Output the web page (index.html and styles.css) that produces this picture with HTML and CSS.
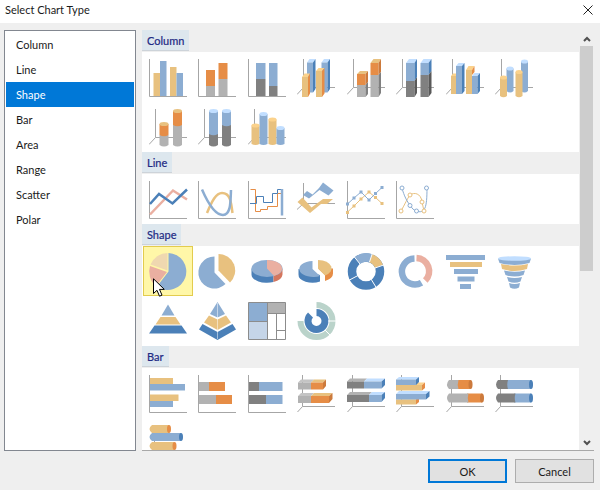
FILE: index.html
```html
<!DOCTYPE html>
<html lang="en">
<head>
    <meta charset="UTF-8">
    <meta name="viewport" content="width=device-width, initial-scale=1.0">
    <title>Select Chart Type</title>
    <link rel="stylesheet" href="styles.css">
</head>
<body>
    <!-- shared axes -->
    <svg class="defs" aria-hidden="true">
        <symbol id="axes" viewBox="0 0 38 38"><path class="axis" d="M.5 0V37.5H38"/></symbol>
        <symbol id="axes3d" viewBox="0 0 38 38"><path class="axis" d="M6.5 0V28.5H38M6.5 28.5L0 35.5"/></symbol>
        <symbol id="axesBar" viewBox="0 0 38 38"><path class="axis" d="M5.5 0V31.5H38M5.5 31.5L.5 37"/></symbol>
    </svg>

    <header class="title-bar">
        <h1>Select Chart Type</h1>
        <button type="button" class="close" aria-label="Close">
            <svg width="10" height="10" viewBox="0 0 10 10"><path d="M.5 .5L9.5 9.5M9.5 .5L.5 9.5"/></svg>
        </button>
    </header>

    <main class="content">
        <nav class="categories">
            <button type="button">Column</button>
            <button type="button">Line</button>
            <button type="button" class="active">Shape</button>
            <button type="button">Bar</button>
            <button type="button">Area</button>
            <button type="button">Range</button>
            <button type="button">Scatter</button>
            <button type="button">Polar</button>
        </nav>

        <div class="gallery">
            <div class="groups">
                <section>
                    <h2><span>Column</span></h2>
                    <div class="charts">
                        <button type="button" aria-label="Clustered column"><svg viewBox="0 0 38 38"><path class="yellow" d="M4.5 14H11V37H4.5zM21 8H27.5V37H21z"/><path class="blue" d="M11 2H17.5V37H11zM27.5 14H34V37H27.5z"/><use href="#axes"/></svg></button>
                        <button type="button" aria-label="Stacked column"><svg viewBox="0 0 38 38"><path class="orange" d="M8 11H17V27H8zM20.5 4H29.5V20H20.5z"/><path class="gray" d="M8 27H17V37H8zM20.5 20H29.5V37H20.5z"/><use href="#axes"/></svg></button>
                        <button type="button" aria-label="Full stacked column"><svg viewBox="0 0 38 38"><path class="blue" d="M8 4H17.5V20H8zM21 4H29.5V27H21z"/><path class="dark" d="M8 20H17.5V37H8zM21 27H29.5V37H21z"/><use href="#axes"/></svg></button>
                        <button type="button" aria-label="Manhattan column"><svg viewBox="0 0 38 38"><use href="#axes3d"/>
                            <path class="light" d="M10 3.5L12.5 0H18.5L16 3.5zM24.5 3.5L27 0H33L30.5 3.5z"/><path class="blue" d="M10 3.5H16V33.5H10zM24.5 3.5H30.5V33.5H24.5z"/><path class="navy" d="M16 3.5L18.5 0V30L16 33.5zM30.5 3.5L33 0V30L30.5 33.5z"/>
                            <path class="cream" d="M5 18L7.5 14.5H13L11 18zM19 12L21.5 9H27.5L25 12z"/><path class="yellow" d="M5 18H11V38H5zM19 12H25V38H19z"/><path class="orange" d="M11 18L13 14.5V34.5L11 38zM25 12L27.5 9V34.5L25 38z"/></svg></button>
                        <button type="button" aria-label="3D stacked column"><svg viewBox="0 0 38 38"><use href="#axes3d"/>
                            <path class="yellow" d="M10 15L13 12H21L18.5 15zM23.5 4L26.5 0H34L31.5 4z"/><path class="orange" d="M10 15H18.5V26H10zM23.5 4H31.5V16H23.5z"/><path class="rust" d="M18.5 15L21 12V23L18.5 26zM31.5 4L34 0V13L31.5 16z"/>
                            <path class="gray" d="M10 26H18.5V38H10zM23.5 16H31.5V38H23.5z"/><path class="dark" d="M18.5 26L21 23V35L18.5 38zM31.5 16L34 13V34L31.5 38z"/></svg></button>
                        <button type="button" aria-label="3D full stacked column"><svg viewBox="0 0 38 38"><use href="#axes3d"/>
                            <path class="light" d="M10 4L13 0H21L18.5 4zM24.5 4L27.5 0H35.5L32.5 4z"/><path class="blue" d="M10 4H18.5V22H10zM24.5 4H32.5V16H24.5z"/><path class="navy" d="M18.5 4L21 0V18L18.5 22zM32.5 4L35.5 0V12L32.5 16z"/>
                            <path class="dark" d="M10 22H18.5V38H10zM24.5 16H32.5V38H24.5z"/><path class="black" d="M18.5 22L21 18V34L18.5 38zM32.5 16L35.5 12V34L32.5 38z"/></svg></button>
                        <button type="button" aria-label="3D clustered column"><svg viewBox="0 0 38 38"><use href="#axes3d"/>
                            <path class="cream" d="M5 17L7 14.5H12V17zM20 11L22.5 7H28.5L26 11z"/><path class="yellow" d="M5 17H11V35H5zM20 11H26V35H20z"/><path class="orange" d="M26 11L28.5 7V13L26 16z"/>
                            <path class="light" d="M10 7L12.5 4H18.5L16 7zM26 17L28.5 14H34L31.5 17z"/><path class="blue" d="M10 7H16V35H10zM26 17H31.5V35H26z"/><path class="navy" d="M16 7L18.5 4V32L16 35zM31.5 17L34 14V32L31.5 35z"/></svg></button>
                        <button type="button" aria-label="Manhattan cylinder"><svg viewBox="0 0 38 38"><use href="#axes3d"/>
                            <path class="blue" d="M11.5 9.5H18.5V32Q15 35 11.5 32zM26 2.5H33V32Q29.5 35 26 32z"/><ellipse class="light" cx="15" cy="9.5" rx="3.5" ry="2"/><ellipse class="light" cx="29.5" cy="2.5" rx="3.5" ry="2"/>
                            <path class="yellow" d="M5 18.5H12V37Q8.5 39.5 5 37zM20.5 13H27.5V37Q24 39.5 20.5 37z"/><ellipse class="cream" cx="8.5" cy="18.5" rx="3.5" ry="2"/><ellipse class="cream" cx="24" cy="13" rx="3.5" ry="2"/></svg></button>
                        <button type="button" aria-label="Stacked cylinder"><svg viewBox="0 0 38 38"><use href="#axes3d"/>
                            <path class="gray" d="M10.5 26H19.5V36Q15 39 10.5 36zM24 16H33V36Q28.5 39 24 36z"/><path class="orange" d="M10.5 15H19.5V26Q15 28.5 10.5 26zM24 2H33V16Q28.5 18.5 24 16z"/><ellipse class="yellow" cx="15" cy="15" rx="4.5" ry="2"/><ellipse class="yellow" cx="28.5" cy="2" rx="4.5" ry="2"/></svg></button>
                        <button type="button" aria-label="Full stacked cylinder"><svg viewBox="0 0 38 38"><use href="#axes3d"/>
                            <path class="dark" d="M11 25H20V36Q15.5 39 11 36zM24 16H33V36Q28.5 39 24 36z"/><path class="blue" d="M11 2H20V25Q15.5 27.5 11 25zM24 2H33V16Q28.5 18.5 24 16z"/><ellipse class="light" cx="15.5" cy="2" rx="4.5" ry="2"/><ellipse class="light" cx="28.5" cy="2" rx="4.5" ry="2"/></svg></button>
                        <button type="button" aria-label="Clustered cylinder"><svg viewBox="0 0 38 38"><use href="#axes3d"/>
                            <path class="yellow" d="M3.5 16.5H11.5V35Q7.5 37 3.5 35zM20.5 10.5H28.5V35Q24.5 37 20.5 35z"/><path class="blue" d="M11.5 5H19.5V35Q15.5 37 11.5 35zM28.5 19H36.5V35Q32.5 37 28.5 35z"/>
                            <ellipse class="cream" cx="7.5" cy="16.5" rx="4" ry="2"/><ellipse class="cream" cx="24.5" cy="10.5" rx="4" ry="2"/><ellipse class="light" cx="15.5" cy="5" rx="4" ry="2"/><ellipse class="light" cx="32.5" cy="19" rx="4" ry="2"/></svg></button>
                    </div>
                </section>

                <section>
                    <h2><span>Line</span></h2>
                    <div class="charts">
                        <button type="button" aria-label="Line"><svg viewBox="0 0 38 38"><use href="#axes"/><path class="line pink-line" d="M1 33.5L24 9.5L38 18.5"/><path class="line navy-line" d="M1 23L10 13L23.5 22.5L38 8.5"/></svg></button>
                        <button type="button" aria-label="Spline"><svg viewBox="0 0 38 38"><use href="#axes"/><path class="line yellow-line" d="M9 32C14 20 18 12 24 12C32 12 33 20 34.5 32"/><path class="line blue-line" d="M4 8.5C9 20 16 34 25 34C33 34 32.5 20 33 9"/></svg></button>
                        <button type="button" aria-label="Step line"><svg viewBox="0 0 38 38"><use href="#axes"/><path class="thin orange-line" d="M2.5 8.5H7.5V30.5H12.5V28.5H19.5V25.5H29.5V12.5H34"/><path class="thin navy-line" d="M2 22.5H8.5V15.5H15.5V21.5H24.5V12.5H29.5V8.5H34.5"/><path class="line blue-line" d="M34 8V34.5"/></svg></button>
                        <button type="button" aria-label="3D line"><svg viewBox="0 0 38 38"><path class="axis" d="M6.5 2V22.5H38M6.5 22.5L0 28.5"/><path class="blue" d="M6 14L10 10L15.5 13.5L22 7L26 1.5L36.5 9.5L31.5 14.5L22.5 9L12 17.5z"/><path class="yellow" d="M.5 21L5.5 16.5L14.5 26.5L26 18H36L30 23H24L13 32z"/></svg></button>
                        <button type="button" aria-label="Scatter line"><svg viewBox="0 0 38 38"><use href="#axes"/><path class="thin yellow-line" d="M.5 31L7 25L14 18L22 11L28.5 16.5L35 22.5"/><path class="thin blue-line" d="M.5 23L7 17L14 11L22 19L28.5 12.5L35 6.5"/>
                            <path class="yellow" d="M-1 30h3v3h-3zM5.5 23.5h3v3h-3zM12.5 16.5h3v3h-3zM20.5 9.5h3v3h-3zM27 15h3v3h-3zM33.5 21h3v3h-3z"/><path class="blue" d="M-1 21.5h3v3h-3zM5.5 15.5h3v3h-3zM12.5 9.5h3v3h-3zM20.5 17.5h3v3h-3zM27 11h3v3h-3zM33.5 5h3v3h-3z"/></svg></button>
                        <button type="button" aria-label="Scatter spline"><svg viewBox="0 0 38 38"><use href="#axes"/><path class="thin yellow-line" d="M5 30C9 23 11 18 14 14C18 11 25 12 26 21L28 30"/><path class="thin blue-line" d="M6 7C8 15 11 20 14 24.5Q17 29 20 30C29 33 31 27 31 7"/>
                            <g class="ring yellow-line"><circle cx="5" cy="30" r="2"/><circle cx="14" cy="14" r="2"/><circle cx="26" cy="21" r="2"/><circle cx="28" cy="30" r="2"/></g><g class="ring blue-line"><circle cx="6" cy="7" r="2"/><circle cx="14" cy="24.5" r="2"/><circle cx="20.5" cy="30" r="2"/><circle cx="30.5" cy="7" r="2"/></g></svg></button>
                    </div>
                </section>

                <section>
                    <h2><span>Shape</span></h2>
                    <div class="charts">
                        <button type="button" class="selected" aria-label="Pie">
                            <svg viewBox="0 0 38 38"><path class="blue" d="M19.5 18.5V0A18.5 18.5 0 1 1 8 33.5z"/><path class="pink" d="M18 19L7 33A18.5 18.5 0 0 1 1 13z"/><path class="tan" d="M18.5 17.5L1.5 11.5A18.5 18.5 0 0 1 18.5 0z"/></svg>
                            <svg class="cursor" viewBox="0 0 12 19"><path d="M.5 .8V15.5L4 12.3L6.5 18.2L9 17.1L6.5 11.4H11.3z"/></svg>
                        </button>
                        <button type="button" aria-label="Exploded pie"><svg viewBox="0 0 38 38"><path class="blue" d="M16.5 19.5V3.5A16 16 0 1 0 27.5 31z"/><path class="yellow" d="M20.5 17.5V1A16.5 16.5 0 0 1 32 29.5z"/></svg></button>
                        <button type="button" aria-label="3D pie"><svg viewBox="0 0 38 38"><path class="navy" d="M3.5 15.5V21.5A15.5 8 0 0 0 25.5 29V22z"/><path class="red" d="M34.5 15.5V21.5Q34 27 25.5 29V22z"/><ellipse class="blue" cx="19" cy="15.5" rx="15.5" ry="8.5"/><path class="pink" d="M19 15.5V7A15.5 8.5 0 0 1 26 23z"/></svg></button>
                        <button type="button" aria-label="3D exploded pie"><svg viewBox="0 0 38 38"><path class="navy" d="M1.5 16V21.5A14 8 0 0 0 23 28.5V22z"/><path class="blue" d="M15.5 16V8A14 8 0 1 0 23 23z"/><path class="orange" d="M21 15.5L28 22V28Q36 25.5 36 20.5V15.5z"/><path class="yellow" d="M21 15.5V7A15 8.5 0 0 1 28 22.5z"/></svg></button>
                        <button type="button" aria-label="Doughnut"><svg viewBox="0 0 38 38"><g fill="none" stroke-width="8.5"><circle class="navy-line" cx="19" cy="18.5" r="14"/><path class="blue-line" d="M10.4 7.5A14 14 0 0 1 23.8 5.3"/><path class="yellow-line" d="M23.8 5.3A14 14 0 0 1 32 13.3"/></g><path class="split" d="M13 11L7 3.5M22.5 9L25.5 0M28 15L38 11.5M24 26L29.5 35M11 22.5L1.5 27.5"/></svg></button>
                        <button type="button" aria-label="Exploded doughnut"><svg viewBox="0 0 38 38"><g fill="none" stroke-width="6.5"><path class="blue-line" d="M18.5 5.5A13 13 0 1 0 25.5 29.7"/><path class="pink-line" d="M20.5 5A13.2 13.2 0 0 1 29.3 27.5"/></g></svg></button>
                        <button type="button" aria-label="Funnel"><svg viewBox="0 0 38 38"><path class="blue" d="M0 2H39V7H0zM8 16H32V21H8zM11.5 23.5H28.5V28.5H11.5zM14 31H25V36H14z"/><path class="yellow" d="M4 9H36V14H4z"/></svg></button>
                        <button type="button" aria-label="3D funnel"><svg viewBox="0 0 38 38"><path class="blue" d="M14 30Q19.5 32 25 30L24 34.5Q19.5 37 15 34.5z"/><path class="blue" d="M12 24Q19.5 26 27 24L25.5 28.5Q19.5 31 13.5 28.5z"/><path class="blue" d="M9 17.5Q19.5 20 30 17.5L28.5 22Q19.5 25 10.5 22z"/><path class="yellow" d="M6 11Q19.5 14 33 11L32 16Q19.5 20 7 16z"/><path class="blue" d="M3 5.5H36L34.5 10Q19.5 14 4.5 10z"/><ellipse class="light" cx="19.5" cy="5.5" rx="16.5" ry="2.3"/></svg></button>
                        <button type="button" aria-label="Pyramid"><svg viewBox="0 0 38 38"><path class="blue" d="M19 1.5L25.5 12.5H12.5z"/><path class="yellow" d="M11.5 14H26.5L31.5 21.5H6.5z"/><path class="navy" d="M5.5 22.5H32.5L38 30.5H0z"/></svg></button>
                        <button type="button" aria-label="3D pyramid"><svg viewBox="0 0 38 38"><path class="blue" d="M19.5 -1L27 11L19.5 14.5L12 11z"/><path class="yellow" d="M11 12.5L19.5 16.5L28 12.5L33 19.5L19.5 27L6 19.5z"/><path class="navy" d="M4.5 21L19.5 29L34.5 21L38 26.5L19.5 37L1 26.5z"/><path class="seam" d="M19.5 0V36"/></svg></button>
                        <button type="button" aria-label="Treemap"><svg viewBox="0 0 38 38"><path fill="#fff" d="M.5 -.5H37.5V36.5H.5z"/><path class="blue" d="M.5 -.5H19.5V18.5H.5z"/><path class="pale" d="M.5 18.5H19.5V36.5H.5z"/><path class="gray" d="M19.5 -.5H37.5V10.5H19.5z"/><path class="grid" d="M.5 -.5H37.5V36.5H.5zM19.5 -.5V36.5M.5 18.5H19.5M19.5 10.5H37.5M28.5 10.5V36.5M28.5 27.5H37.5"/></svg></button>
                        <button type="button" aria-label="Sunburst"><svg viewBox="0 0 38 38"><g fill="none" stroke-width="6"><path class="green-line" d="M19.5 2A16 16 0 1 1 3.5 18"/><path class="navy-line" stroke-width="7" d="M19.5 9.5A8.5 8.5 0 1 1 13.5 12"/></g><path class="split" d="M31 18H39M28 27L34 33"/></svg></button>
                    </div>
                </section>

                <section>
                    <h2><span>Bar</span></h2>
                    <div class="charts">
                        <button type="button" aria-label="Clustered bar"><svg viewBox="0 0 38 38"><path class="yellow" d="M1 3H24V9H1zM1 19.5H29.5V26H1z"/><path class="blue" d="M1 9H36V15.5H1zM1 26H24V32H1z"/><use href="#axes"/></svg></button>
                        <button type="button" aria-label="Stacked bar"><svg viewBox="0 0 38 38"><path class="gray" d="M1 7H11V16H1zM1 20H18V29H1z"/><path class="orange" d="M11 7H27V16H11zM18 20H34V29H18z"/><use href="#axes"/></svg></button>
                        <button type="button" aria-label="Full stacked bar"><svg viewBox="0 0 38 38"><path class="dark" d="M1 7H11V16H1zM1 20H18V29H1z"/><path class="blue" d="M11 7H34.5V16H11zM18 20H34.5V29H18z"/><use href="#axes"/></svg></button>
                        <button type="button" aria-label="3D stacked bar"><svg viewBox="0 0 38 38"><use href="#axesBar"/>
                            <path class="silver" d="M1 7.5L4 4.5H17L14 7.5zM1 21L4 18H17L14 21z"/><path class="yellow" d="M14 7.5L17 4.5H29L26 7.5zM14 21L17 18H35.5L32 21z"/><path class="gray" d="M1 7.5H14V14.5H1zM1 21H14V28H1z"/><path class="orange" d="M14 7.5H26V14.5H14zM14 21H32V28H14z"/><path class="rust" d="M26 7.5L29 4.5V11L26 14.5zM32 21L35.5 18V24L32 28z"/></svg></button>
                        <button type="button" aria-label="3D full stacked bar"><svg viewBox="0 0 38 38"><use href="#axesBar"/>
                            <path class="gray" d="M0 6.5L3 3.5H20L17 6.5zM0 20L3 17H25L22 20z"/><path class="light" d="M17 6.5L20 3.5H38L34.5 6.5zM22 20L25 17H38L34.5 20z"/><path class="dark" d="M0 6.5H17V13.5H0zM0 20H22V27H0z"/><path class="blue" d="M17 6.5H34.5V13.5H17zM22 20H34.5V27H22z"/><path class="navy" d="M34.5 6.5L38 3.5V10L34.5 13.5zM34.5 20L38 17V23L34.5 27z"/></svg></button>
                        <button type="button" aria-label="3D clustered bar"><svg viewBox="0 0 38 38"><use href="#axesBar"/>
                            <path class="cream" d="M0 10L3 7.5H29L26 10zM0 24.5L3 22H23L20 24.5z"/><path class="yellow" d="M0 10H26V15.5H0zM0 24.5H20V29.5H0z"/><path class="orange" d="M26 10L29 7.5V13L26 15.5zM20 24.5L23 22V27L20 29.5z"/>
                            <path class="light" d="M0 4.5L3 2H23L20 4.5zM0 19L3 16H33.5L30 19z"/><path class="blue" d="M0 4.5H20V10H0zM0 19H30V24.5H0z"/><path class="navy" d="M20 4.5L23 2V7L20 10zM30 19L33.5 16V21.5L30 24.5z"/></svg></button>
                        <button type="button" aria-label="Stacked cylinder bar"><svg viewBox="0 0 38 38"><use href="#axesBar"/>
                            <path class="orange" d="M11 5H24.5V14H11zM21 18.5H36V27.5H21z"/><path class="gray" d="M3 5H12.5Q11 9.5 12.5 14H3Q-1 9.5 3 5zM3 18.5H22.5Q21 23 22.5 27.5H3Q-1 23 3 18.5z"/><ellipse class="rust" cx="24.5" cy="9.5" rx="2" ry="4.5"/><ellipse class="rust" cx="36" cy="23" rx="2" ry="4.5"/></svg></button>
                        <button type="button" aria-label="Full stacked cylinder bar"><svg viewBox="0 0 38 38"><use href="#axesBar"/>
                            <path class="blue" d="M11 5H36V14H11zM19 18.5H36V27.5H19z"/><path class="dark" d="M3 5H13Q11.5 9.5 13 14H3Q-1 9.5 3 5zM3 18.5H20.5Q19 23 20.5 27.5H3Q-1 23 3 18.5z"/><ellipse class="navy" cx="36" cy="9.5" rx="2" ry="4.5"/><ellipse class="navy" cx="36" cy="23" rx="2" ry="4.5"/></svg></button>
                        <button type="button" aria-label="Clustered cylinder bar"><svg viewBox="0 0 38 38"><use href="#axesBar"/>
                            <path class="yellow" d="M3 0H20V8H3Q-2 4 3 0zM3 17H25.5V25H3Q-2 21 3 17z"/><path class="blue" d="M3 8H32V16H3Q-2 12 3 8z"/><ellipse class="orange" cx="20" cy="4" rx="2" ry="4"/><ellipse class="navy" cx="32" cy="12" rx="2" ry="4"/><ellipse class="orange" cx="25.5" cy="21" rx="2" ry="4"/></svg></button>
                    </div>
                </section>
            </div>

            <div class="scrollbar" aria-hidden="true">
                <svg width="8" height="16" viewBox="0 0 8 16"><path d="M1 11L4 8L7 11"/></svg>
                <div class="track"><div class="thumb"></div></div>
                <svg width="8" height="16" viewBox="0 0 8 16"><path d="M1 7L4 10L7 7"/></svg>
            </div>
        </div>
    </main>

    <footer class="actions">
        <button type="button" class="primary">OK</button>
        <button type="button">Cancel</button>
    </footer>
</body>
</html>
```
FILE: styles.css
```css
* {
    box-sizing: border-box;
}

body {
    display: flex;
    flex-direction: column;
    height: 100vh;
    margin: 0;
    background-color: #efefef;
    color: #1a1a1a;
    font-family: Lato, "Open Sans", sans-serif;
    font-size: 11px;
    overflow: hidden;
}

button {
    margin: 0;
    padding: 0;
    border: none;
    background: none;
    color: inherit;
    font: inherit;
}

.defs {
    position: absolute;
    width: 0;
    height: 0;
}

/* title bar */
.title-bar {
    display: flex;
    justify-content: space-between;
    align-items: center;
    height: 23px;
    padding: 0 7px 4px 5px;
    background-color: white;
}

.title-bar h1 {
    margin: 0;
    font-size: 11px;
    font-weight: normal;
}

.close {
    display: flex;
}

.close svg {
    fill: none;
    stroke: #222;
}

.content {
    display: flex;
    flex: 1;
    gap: 6px;
    min-height: 0;
    padding: 7px 6px 0 4px;
}

/* category list */
.categories {
    flex: none;
    width: 132px;
    padding: 1px;
    border: 1px solid #828790;
    background-color: white;
}

.categories button {
    display: block;
    width: 100%;
    height: 25px;
    padding-left: 10px;
    text-align: left;
}

.categories .active {
    background-color: #0078d7;
    color: white;
}

/* chart gallery */
.gallery {
    display: flex;
    flex: 1;
    min-width: 0;
    border-bottom: 1px solid #a8a8a8;
}

.groups {
    flex: 1;
    overflow: hidden;
    background-color: white;
}

.groups h2 {
    display: flex;
    height: 22px;
    margin: 0;
    background-color: #efefef;
    color: #1e2a84;
    font-size: 11px;
    font-weight: normal;
    line-height: 22px;
}

.groups h2 span {
    height: 21px;
    padding: 0 5px;
    border-bottom: 1px solid #cdd3d9;
    background-color: #dde7ee;
    -webkit-text-stroke: 0.2px #1e2a84;
}

.charts {
    display: grid;
    grid-template-columns: repeat(8, 1fr);
    grid-auto-rows: 50px;
    max-width: 398px;
    padding: 0 1px;
}

.charts button {
    position: relative;
    display: flex;
    justify-content: center;
    padding-top: 7px;
}

.charts svg {
    width: 38px;
    height: 38px;
    overflow: visible;
}

.charts .selected {
    border: 1px solid #e3cc4e;
    padding-top: 6px;
    background-color: #fff7a8;
}

.charts .cursor {
    position: absolute;
    left: 9px;
    top: 31px;
    width: 12px;
    height: 19px;
    fill: white;
    stroke: black;
}

/* scrollbar */
.scrollbar {
    display: flex;
    flex-direction: column;
    align-items: center;
    width: 15px;
}

.scrollbar svg {
    flex: none;
    fill: none;
    stroke: #505050;
    stroke-width: 2;
}

.track {
    flex: 1;
    width: 13px;
}

.thumb {
    height: 58%;
    background-color: #cdcdcd;
}

/* buttons */
.actions {
    display: flex;
    justify-content: flex-end;
    gap: 8px;
    padding: 8px 6px 7px;
}

.actions button {
    width: 79px;
    height: 24px;
    border: 1px solid #adadad;
    background-color: #e1e1e1;
}

.actions .primary {
    border: 2px solid #0078d7;
}

/* icon colours */
.yellow { fill: #e8c17f; }
.cream { fill: #fbd28c; }
.tan { fill: #efd8b0; }
.blue { fill: #8cadd2; }
.light { fill: #c1deff; }
.pale { fill: #c5d5e8; }
.navy { fill: #4b80b8; }
.orange { fill: #e68d46; }
.rust { fill: #cc7a3c; }
.pink { fill: #eaafa1; }
.red { fill: #d4765e; }
.silver { fill: #c4c4c4; }
.gray { fill: #b2b2b2; }
.dark { fill: #808080; }
.black { fill: #595959; }

.axis {
    fill: none;
    stroke: #a6a6a6;
}

.line {
    fill: none;
    stroke-width: 2.5;
}

.thin {
    fill: none;
    stroke-width: 1;
}

.ring {
    fill: white;
    stroke-width: 1;
}

.navy-line { stroke: #4b80b8; }
.blue-line { stroke: #8cadd2; }
.yellow-line { stroke: #e8c17f; }
.orange-line { stroke: #e68d46; }
.pink-line { stroke: #eaafa1; }
.green-line { stroke: #bad3ca; }

.split {
    stroke: white;
}

.seam {
    stroke: rgba(255, 255, 255, 0.5);
}

.grid {
    fill: none;
    stroke: #8c8c8c;
}
```
